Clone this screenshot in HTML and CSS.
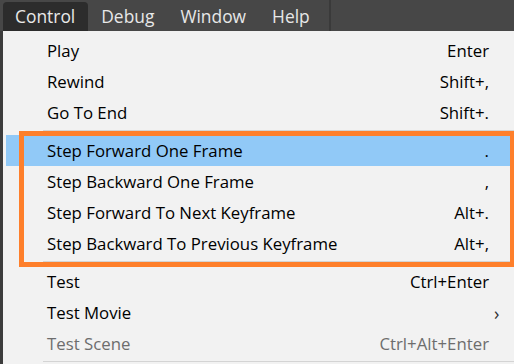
FILE: index.html
```html
<!DOCTYPE html>
<html>
<head>
<meta charset="utf-8">
<link rel="stylesheet" href="styles.css">
</head>
<body>
<div class="menubar">
  <div class="tab active">Control</div>
  <div class="tab">Debug</div>
  <div class="tab">Window</div>
  <div class="tab">Help</div>
  <div class="divider"></div>
</div>
<div class="menu">
  <div class="item"><span class="label">Play</span><span class="key">Enter</span><span class="arrow"></span></div>
  <div class="item"><span class="label">Rewind</span><span class="key">Shift+,</span><span class="arrow"></span></div>
  <div class="item"><span class="label">Go To End</span><span class="key">Shift+.</span><span class="arrow"></span></div>
  <div class="sep"></div>
  <div class="item hover"><span class="label">Step Forward One Frame</span><span class="key">.</span><span class="arrow"></span></div>
  <div class="item"><span class="label">Step Backward One Frame</span><span class="key">,</span><span class="arrow"></span></div>
  <div class="item"><span class="label">Step Forward To Next Keyframe</span><span class="key">Alt+.</span><span class="arrow"></span></div>
  <div class="item"><span class="label">Step Backward To Previous Keyframe</span><span class="key">Alt+,</span><span class="arrow"></span></div>
  <div class="sep"></div>
  <div class="item"><span class="label">Test</span><span class="key">Ctrl+Enter</span><span class="arrow"></span></div>
  <div class="item"><span class="label">Test Movie</span><span class="key"></span><span class="arrow">›</span></div>
  <div class="item disabled"><span class="label">Test Scene</span><span class="key">Ctrl+Alt+Enter</span><span class="arrow"></span></div>
  <div class="sep"></div>
  <div class="highlight-box"></div>
</div>
</body>
</html>
```
FILE: styles.css
```css
html, body {
  margin: 0;
  padding: 0;
}
body {
  width: 514px;
  height: 364px;
  overflow: hidden;
  background: #3c3c3c;
  font-family: "Open Sans", "Noto Sans", sans-serif;
}
.menubar {
  height: 31px;
  background: #474747;
  display: flex;
  align-items: flex-end;
  padding-left: 3px;
  box-sizing: border-box;
}
.tab {
  height: 29px;
  line-height: 28px;
  font-size: 17.4px;
  color: #e8e8e8;
  padding: 0 13px;
  border-radius: 4px 4px 0 0;
}
.tab.active {
  background: #2c2c2c;
  padding: 0 13px 0 12px;
}
.divider {
  width: 2px;
  height: 31px;
  background: #3a3a3a;
  margin-left: 6px;
}
.menu {
  position: relative;
  margin-left: 3px;
  background: #f2f2f2;
  padding-top: 4px;
  height: 333px;
  box-sizing: border-box;
  overflow: hidden;
}
.item {
  display: grid;
  grid-template-columns: 1fr auto 22px;
  align-items: center;
  height: 31px;
  margin: 0 3px;
  padding-left: 41px;
  font-size: 16.8px;
  color: #000;
}
.item.hover {
  background: #91c9f7;
}
.item.disabled {
  color: #6d6d6d;
}
.arrow {
  padding-left: 5px;
  font-size: 18px;
  line-height: 1;
  color: #333;
}
.sep {
  margin-left: 40px;
  box-sizing: border-box;
  border-top: 1px solid #d4d4d4;
  margin-top: 2px;
  height: 5px;
}
.highlight-box {
  position: absolute;
  left: 16px;
  top: 100px;
  width: 496px;
  height: 136px;
  box-sizing: border-box;
  border: 5px solid #fe7f2b;
}
```
